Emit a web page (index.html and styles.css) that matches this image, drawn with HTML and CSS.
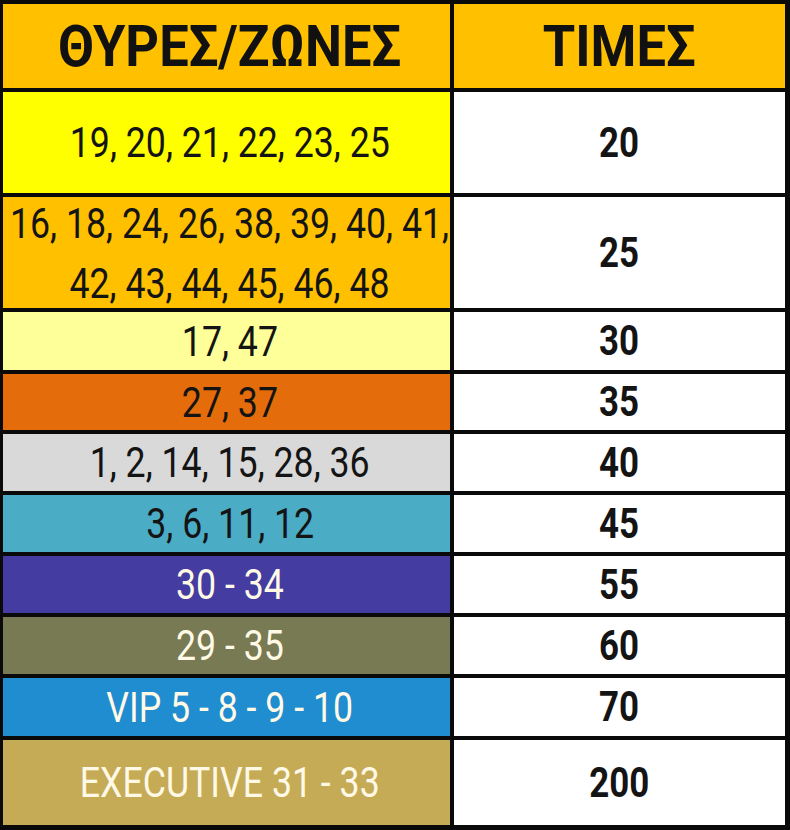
FILE: index.html
```html
<!DOCTYPE html>
<html lang="el">
<head>
<meta charset="utf-8">
<title>Τιμές</title>
<link rel="stylesheet" href="styles.css">
</head>
<body>
<div class="table">
  <div class="cell zone head"><span class="t">ΘΥΡΕΣ/ΖΩΝΕΣ</span></div>
  <div class="cell price head"><span class="t">ΤΙΜΕΣ</span></div>

  <div class="cell zone c-yellow"><span class="t">19, 20, 21, 22, 23, 25</span></div>
  <div class="cell price"><span class="t">20</span></div>

  <div class="cell zone c-amber two"><span class="t">16, 18, 24, 26, 38, 39, 40, 41,<br>42, 43, 44, 45, 46, 48</span></div>
  <div class="cell price"><span class="t">25</span></div>

  <div class="cell zone c-cream"><span class="t">17, 47</span></div>
  <div class="cell price"><span class="t">30</span></div>

  <div class="cell zone c-orange"><span class="t">27, 37</span></div>
  <div class="cell price"><span class="t">35</span></div>

  <div class="cell zone c-grey"><span class="t">1, 2, 14, 15, 28, 36</span></div>
  <div class="cell price"><span class="t">40</span></div>

  <div class="cell zone c-teal"><span class="t">3, 6, 11, 12</span></div>
  <div class="cell price"><span class="t">45</span></div>

  <div class="cell zone c-indigo light"><span class="t">30 - 34</span></div>
  <div class="cell price"><span class="t">55</span></div>

  <div class="cell zone c-olive light"><span class="t">29 - 35</span></div>
  <div class="cell price"><span class="t">60</span></div>

  <div class="cell zone c-blue light"><span class="t">VIP 5 - 8 - 9 - 10</span></div>
  <div class="cell price"><span class="t">70</span></div>

  <div class="cell zone c-gold light"><span class="t">EXECUTIVE 31 - 33</span></div>
  <div class="cell price"><span class="t">200</span></div>
</div>
</body>
</html>
```

FILE: styles.css
```css
html, body {
  margin: 0;
  padding: 0;
  background: #000;
}

.table {
  width: 790px;
  height: 830px;
  box-sizing: border-box;
  background: #0a0a0a;
  padding: 4px 5px 5px 3px;
  display: grid;
  grid-template-columns: 447px 331px;
  grid-template-rows: 84px 101px 111px 58px 56px 57px 57px 57px 57px 58px 85px;
  gap: 4px;
  font-family: Roboto, "Noto Sans", "DejaVu Sans", sans-serif;
  color: #141414;
}

.cell {
  display: flex;
  align-items: center;
  justify-content: center;
  text-align: center;
  overflow: visible;
  white-space: nowrap;
}

.t {
  display: inline-block;
  transform: scaleX(0.83);
  transform-origin: center center;
  line-height: 1;
}

.zone {
  padding-left: 7px;
  font-size: 43px;
  font-weight: 400;
}

.price {
  background: #ffffff;
  font-size: 42px;
  font-weight: 700;
}

.head {
  background: #ffc000;
  font-size: 57px;
  font-weight: 700;
  color: #111;
}

.head .t {
  transform: scaleX(0.92);
}

.two .t {
  line-height: 60px;
}

.light {
  color: #fff9e6;
}

.c-yellow { background: #ffff00; }
.c-amber  { background: #ffc000; }
.c-cream  { background: #ffff99; }
.c-orange { background: #e46c0a; }
.c-grey   { background: #d9d9d9; }
.c-teal   { background: #4bacc6; }
.c-indigo { background: #443ca0; }
.c-olive  { background: #777a52; }
.c-blue   { background: #1f8dd0; }
.c-gold   { background: #c5ab56; }
```
